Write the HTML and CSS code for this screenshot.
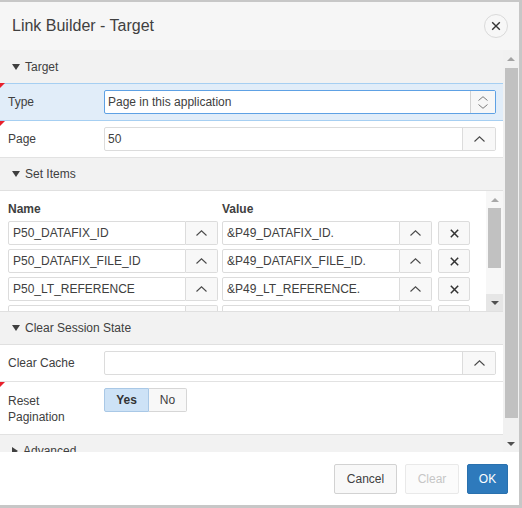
FILE: index.html
```html
<!DOCTYPE html>
<html>
<head>
<meta charset="utf-8">
<title>Link Builder - Target</title>
<link rel="stylesheet" href="styles.css">
</head>
<body>
<div class="dialog">
  <div class="titlebar">
    <div class="title">Link Builder - Target</div>
    <div class="close"><svg width="10" height="10" viewBox="0 0 10 10"><path d="M1.2 1.2L8.8 8.8M8.8 1.2L1.2 8.8" stroke="#333" stroke-width="1.4" fill="none"/></svg></div>
  </div>
  <div class="body">
    <div class="content">
      <div class="section-head first"><svg class="caret" width="8" height="6" viewBox="0 0 8 6"><path d="M0 0H8L4 6Z" fill="#404040"/></svg>Target</div>
      <div class="row row-focus req">
        <div class="label">Type</div>
        <div class="field focus">
          <span class="val">Page in this application</span>
          <span class="spin">
            <svg width="10" height="5" viewBox="0 0 10 5"><path d="M0.5 4.5L5 0.7L9.5 4.5" fill="none" stroke="#7a7a7a" stroke-width="1"/></svg>
            <svg width="10" height="5" viewBox="0 0 10 5"><path d="M0.5 0.5L5 4.3L9.5 0.5" fill="none" stroke="#7a7a7a" stroke-width="1"/></svg>
          </span>
        </div>
      </div>
      <div class="row req">
        <div class="label">Page</div>
        <div class="field">
          <span class="val">50</span>
          <span class="btn"><svg width="11" height="6" viewBox="0 0 11 6"><path d="M0.5 5.5L5.5 0.8L10.5 5.5" fill="none" stroke="#4a4a4a" stroke-width="1.1"/></svg></span>
        </div>
      </div>
      <div class="section-head"><svg class="caret" width="8" height="6" viewBox="0 0 8 6"><path d="M0 0H8L4 6Z" fill="#404040"/></svg>Set Items</div>
      <div class="items">
        <div class="items-main">
          <div class="items-head"><span class="h-name">Name</span><span>Value</span></div>
          <div class="item-row">
            <div class="inp">P50_DATAFIX_ID</div>
            <div class="ibtn"><svg width="11" height="6" viewBox="0 0 11 6"><path d="M0.5 5.5L5.5 0.8L10.5 5.5" fill="none" stroke="#4a4a4a" stroke-width="1.1"/></svg></div>
            <div class="inp gap">&amp;P49_DATAFIX_ID.</div>
            <div class="ibtn"><svg width="11" height="6" viewBox="0 0 11 6"><path d="M0.5 5.5L5.5 0.8L10.5 5.5" fill="none" stroke="#4a4a4a" stroke-width="1.1"/></svg></div>
            <div class="xbtn"><svg width="9" height="9" viewBox="0 0 9 9"><path d="M0.8 0.8L8.2 8.2M8.2 0.8L0.8 8.2" stroke="#333" stroke-width="1.5" fill="none"/></svg></div>
          </div>
          <div class="item-row">
            <div class="inp">P50_DATAFIX_FILE_ID</div>
            <div class="ibtn"><svg width="11" height="6" viewBox="0 0 11 6"><path d="M0.5 5.5L5.5 0.8L10.5 5.5" fill="none" stroke="#4a4a4a" stroke-width="1.1"/></svg></div>
            <div class="inp gap">&amp;P49_DATAFIX_FILE_ID.</div>
            <div class="ibtn"><svg width="11" height="6" viewBox="0 0 11 6"><path d="M0.5 5.5L5.5 0.8L10.5 5.5" fill="none" stroke="#4a4a4a" stroke-width="1.1"/></svg></div>
            <div class="xbtn"><svg width="9" height="9" viewBox="0 0 9 9"><path d="M0.8 0.8L8.2 8.2M8.2 0.8L0.8 8.2" stroke="#333" stroke-width="1.5" fill="none"/></svg></div>
          </div>
          <div class="item-row">
            <div class="inp">P50_LT_REFERENCE</div>
            <div class="ibtn"><svg width="11" height="6" viewBox="0 0 11 6"><path d="M0.5 5.5L5.5 0.8L10.5 5.5" fill="none" stroke="#4a4a4a" stroke-width="1.1"/></svg></div>
            <div class="inp gap">&amp;P49_LT_REFERENCE.</div>
            <div class="ibtn"><svg width="11" height="6" viewBox="0 0 11 6"><path d="M0.5 5.5L5.5 0.8L10.5 5.5" fill="none" stroke="#4a4a4a" stroke-width="1.1"/></svg></div>
            <div class="xbtn"><svg width="9" height="9" viewBox="0 0 9 9"><path d="M0.8 0.8L8.2 8.2M8.2 0.8L0.8 8.2" stroke="#333" stroke-width="1.5" fill="none"/></svg></div>
          </div>
          <div class="item-row">
            <div class="inp"></div>
            <div class="ibtn"></div>
            <div class="inp gap"></div>
            <div class="ibtn"></div>
            <div class="xbtn"></div>
          </div>
        </div>
        <div class="mini-scroll">
          <div class="ms-up"><svg width="8" height="4" viewBox="0 0 8 4"><path d="M0 4H8L4 0Z" fill="#a8a8a8"/></svg></div>
          <div class="ms-thumb"></div>
          <div class="ms-fill"></div>
          <div class="ms-down"><svg width="8" height="4" viewBox="0 0 8 4"><path d="M0 0H8L4 4Z" fill="#505050"/></svg></div>
        </div>
      </div>
      <div class="section-head"><svg class="caret" width="8" height="6" viewBox="0 0 8 6"><path d="M0 0H8L4 6Z" fill="#404040"/></svg>Clear Session State</div>
      <div class="row">
        <div class="label">Clear Cache</div>
        <div class="field">
          <span class="val"></span>
          <span class="btn"><svg width="11" height="6" viewBox="0 0 11 6"><path d="M0.5 5.5L5.5 0.8L10.5 5.5" fill="none" stroke="#4a4a4a" stroke-width="1.1"/></svg></span>
        </div>
      </div>
      <div class="row req">
        <div class="label tall">Reset<br>Pagination</div>
        <div class="toggle">
          <div class="tg on">Yes</div>
          <div class="tg off">No</div>
        </div>
      </div>
      <div class="section-head"><svg class="caret" width="6" height="8" viewBox="0 0 6 8"><path d="M0 0L6 4L0 8Z" fill="#404040"/></svg>Advanced</div>
    </div>
    <div class="vscroll">
      <div class="vs-up"><svg width="8" height="4" viewBox="0 0 8 4"><path d="M0 4H8L4 0Z" fill="#a3a3a3"/></svg></div>
      <div class="vs-thumb"></div>
      <div class="vs-fill"></div>
      <div class="vs-down"><svg width="8" height="4" viewBox="0 0 8 4"><path d="M0 0H8L4 4Z" fill="#505050"/></svg></div>
    </div>
  </div>
  <div class="footer">
    <div class="fbtn cancel">Cancel</div>
    <div class="fbtn clear">Clear</div>
    <div class="fbtn ok">OK</div>
  </div>
</div>
</body>
</html>
```

FILE: styles.css
```css
* { box-sizing: border-box; }
html, body { margin: 0; padding: 0; }
body {
  background: #c7c7c7;
  font-family: "Liberation Sans", Arial, sans-serif;
  font-size: 12px;
  color: #404040;
  width: 522px;
  height: 508px;
  overflow: hidden;
}
.dialog {
  margin-top: 2px;
  width: 519px;
  height: 503px;
  background: #fff;
  display: flex;
  flex-direction: column;
}
.titlebar {
  height: 48px;
  flex: none;
  background: #f6f6f6;
  display: flex;
  align-items: center;
  justify-content: space-between;
  padding: 0 11px 0 12px;
}
.title { font-size: 16px; color: #404040; }
.close {
  width: 24px;
  height: 24px;
  border-radius: 50%;
  border: 1px solid #dadada;
  background: #f7f7f7;
  display: flex;
  align-items: center;
  justify-content: center;
}
.body { height: 402px; flex: none; display: flex; }
.content { width: 503px; flex: none; overflow: hidden; }
.section-head {
  height: 33px;
  background: #f2f2f2;
  border-bottom: 1px solid #e0e0e0;
  display: flex;
  align-items: center;
  gap: 5px;
  padding-left: 12px;
}
.section-head.first { border-bottom: none; }
.caret { flex: none; }
.row {
  display: flex;
  align-items: flex-start;
  padding: 6px 7px 6px 8px;
  border-bottom: 1px solid #e2e2e2;
  position: relative;
}
.row-focus {
  background: #e1edf9;
  border-top: 1px solid #a6cff2;
  border-bottom-color: #a6cff2;
}
.label { width: 96px; flex: none; padding: 4px 0; line-height: 16px; }
.label.tall { padding: 5px 0 3px; }
.req::before {
  content: "";
  position: absolute;
  left: 0;
  top: 0;
  border-top: 5px solid #e8202c;
  border-right: 5px solid transparent;
}
.row-focus.req::before { top: -1px; }
.field {
  flex: 1;
  height: 24px;
  display: flex;
  border: 1px solid #dcdcdc;
  border-radius: 2px;
  background: #fff;
  overflow: hidden;
}
.field.focus { border-color: #5ea1e4; }
.field .val { flex: 1; padding-left: 3px; line-height: 22px; }
.spin {
  width: 25px;
  border-left: 1px solid #d2d2d2;
  background: #f7f7f7;
  display: flex;
  flex-direction: column;
  align-items: center;
  justify-content: center;
  gap: 3px;
}
.spin svg { display: block; }
.btn {
  width: 33px;
  border-left: 1px solid #dcdcdc;
  background: #f8f8f8;
  display: flex;
  align-items: center;
  justify-content: center;
}
.items { display: flex; height: 121px; border-bottom: 1px solid #e0e0e0; }
.items-main { flex: 1; overflow: hidden; padding-left: 8px; }
.items-head { display: flex; height: 30px; padding-top: 10px; font-weight: bold; line-height: 16px; }
.h-name { width: 214px; }
.item-row { display: flex; height: 24px; margin-bottom: 4px; }
.inp {
  width: 178px;
  border: 1px solid #dcdcdc;
  border-radius: 2px 0 0 2px;
  line-height: 22px;
  padding-left: 4px;
  background: #fff;
  white-space: nowrap;
  overflow: hidden;
}
.inp.gap { margin-left: 4px; }
.ibtn {
  width: 32px;
  border: 1px solid #dcdcdc;
  border-left: none;
  border-radius: 0 2px 2px 0;
  background: #f8f8f8;
  display: flex;
  align-items: center;
  justify-content: center;
}
.xbtn {
  width: 32px;
  margin-left: 6px;
  border: 1px solid #dcdcdc;
  border-radius: 2px;
  background: #f8f8f8;
  display: flex;
  align-items: center;
  justify-content: center;
}
.mini-scroll { width: 17px; flex: none; background: #f7f7f7; display: flex; flex-direction: column; }
.ms-up, .ms-down { height: 17px; display: flex; align-items: center; justify-content: center; flex: none; }
.ms-down { background: #e6e6e6; }
.ms-thumb { height: 60px; margin: 0 2px; background: #c1c1c1; flex: none; }
.ms-fill { flex: 1; }
.toggle { display: flex; height: 24px; }
.tg { display: flex; align-items: center; justify-content: center; border: 1px solid #d6d6d6; }
.tg.on { width: 45px; background: #cde2f6; border-color: #a9c8e6; font-weight: bold; border-radius: 2px 0 0 2px; color: #333; }
.tg.off { width: 38px; background: #f8f8f8; border-left: none; border-radius: 0 2px 2px 0; }
.vscroll { width: 16px; flex: none; background: #f1f1f1; display: flex; flex-direction: column; }
.vs-up { height: 18px; display: flex; align-items: center; justify-content: center; flex: none; }
.vs-thumb { height: 350px; margin: 0 1px 0 2px; background: #c1c1c1; flex: none; }
.vs-fill { flex: 1; }
.vs-down { height: 17px; display: flex; align-items: center; justify-content: center; flex: none; }
.footer {
  flex: 1;
  display: flex;
  align-items: center;
  justify-content: flex-end;
  gap: 8px;
  padding-right: 11px;
}
.fbtn {
  height: 30px;
  border: 1px solid #d2d2d2;
  border-radius: 2px;
  background: #f8f8f8;
  display: flex;
  align-items: center;
  justify-content: center;
  color: #404040;
}
.cancel { width: 63px; }
.clear { width: 54px; color: #c6c6c6; border-color: #e9e9e9; background: #fbfbfb; }
.ok { width: 41px; background: #2e7abc; border-color: #2a71ae; color: #fff; }
```
